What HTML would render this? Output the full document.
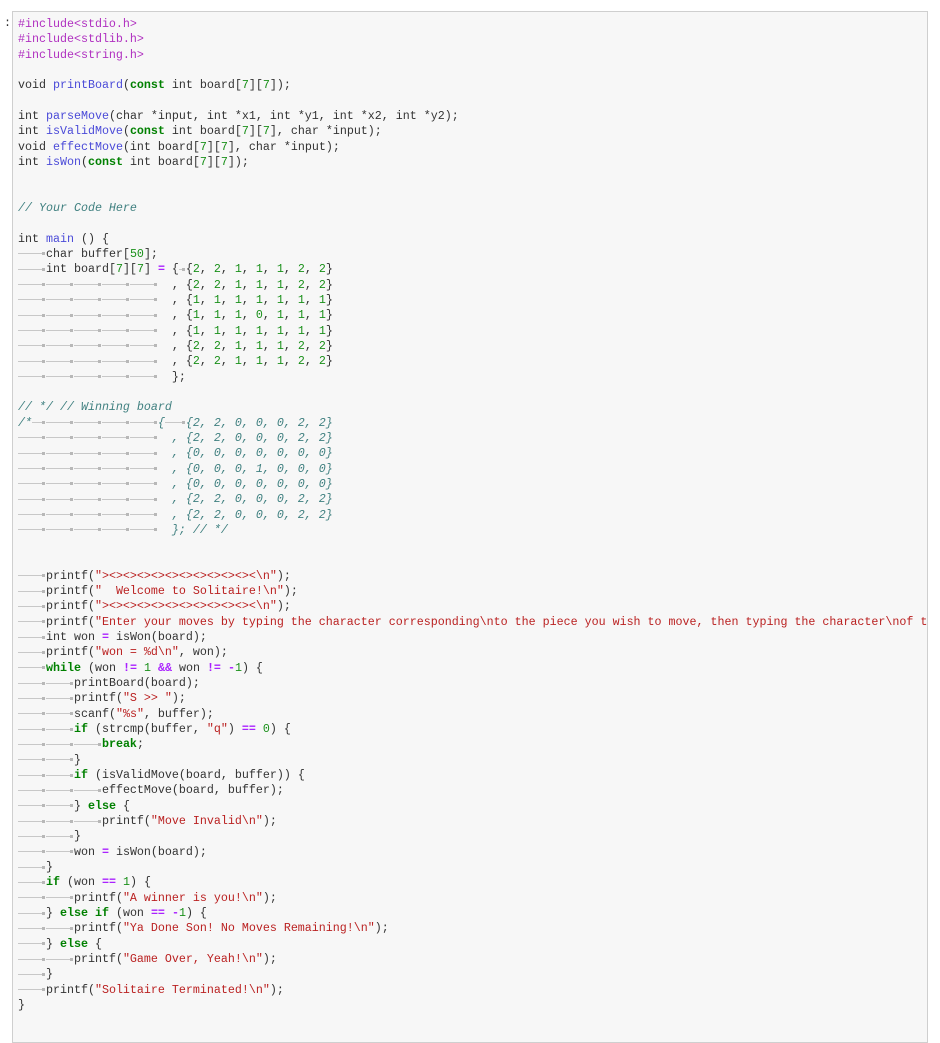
<!DOCTYPE html>
<html><head><meta charset="utf-8"><style>
html,body{margin:0;padding:0;background:#fff;width:940px;height:1024px;overflow:hidden}
.p{position:absolute;left:4px;top:16px;font:11.67px/15.33px "Liberation Mono",monospace;color:#303030}
.box{position:absolute;left:12px;top:11px;width:914px;height:1030px;background:#f7f7f7;border:1px solid #cfcfcf;overflow:hidden}
pre{margin:0;position:absolute;left:5px;top:5px;font:11.67px/15.33px "Liberation Mono",monospace;color:#333;tab-size:4;-moz-tab-size:4;white-space:pre}
.m{color:#b030c0}.f{color:#4a4ad8}.k{color:#008000;font-weight:bold}.n{color:#1a901a}.s{color:#ba2121}.o{color:#aa22ff;font-weight:bold}.c{color:#408080;font-style:italic}
.t{background:linear-gradient(#c8c8c8,#c8c8c8) left center/calc(100% - 4px) 1px no-repeat,linear-gradient(#b8b8b8,#b8b8b8) right 1px center/3px 3px no-repeat}
</style></head><body>
<div class="p">:</div>
<div class="box"><pre><span class="m">#include&lt;stdio.h&gt;</span>
<span class="m">#include&lt;stdlib.h&gt;</span>
<span class="m">#include&lt;string.h&gt;</span>

void <span class="f">printBoard</span>(<span class="k">const</span> int board[<span class="n">7</span>][<span class="n">7</span>]);

int <span class="f">parseMove</span>(char *input, int *x1, int *y1, int *x2, int *y2);
int <span class="f">isValidMove</span>(<span class="k">const</span> int board[<span class="n">7</span>][<span class="n">7</span>], char *input);
void <span class="f">effectMove</span>(int board[<span class="n">7</span>][<span class="n">7</span>], char *input);
int <span class="f">isWon</span>(<span class="k">const</span> int board[<span class="n">7</span>][<span class="n">7</span>]);


<span class="c">// Your Code Here</span>

int <span class="f">main</span> () {
<span class="t">	</span>char buffer[<span class="n">50</span>];
<span class="t">	</span>int board[<span class="n">7</span>][<span class="n">7</span>] <span class="o">=</span> {<span class="t">	</span>{<span class="n">2</span>, <span class="n">2</span>, <span class="n">1</span>, <span class="n">1</span>, <span class="n">1</span>, <span class="n">2</span>, <span class="n">2</span>}
<span class="t">	</span><span class="t">	</span><span class="t">	</span><span class="t">	</span><span class="t">	</span>  , {<span class="n">2</span>, <span class="n">2</span>, <span class="n">1</span>, <span class="n">1</span>, <span class="n">1</span>, <span class="n">2</span>, <span class="n">2</span>}
<span class="t">	</span><span class="t">	</span><span class="t">	</span><span class="t">	</span><span class="t">	</span>  , {<span class="n">1</span>, <span class="n">1</span>, <span class="n">1</span>, <span class="n">1</span>, <span class="n">1</span>, <span class="n">1</span>, <span class="n">1</span>}
<span class="t">	</span><span class="t">	</span><span class="t">	</span><span class="t">	</span><span class="t">	</span>  , {<span class="n">1</span>, <span class="n">1</span>, <span class="n">1</span>, <span class="n">0</span>, <span class="n">1</span>, <span class="n">1</span>, <span class="n">1</span>}
<span class="t">	</span><span class="t">	</span><span class="t">	</span><span class="t">	</span><span class="t">	</span>  , {<span class="n">1</span>, <span class="n">1</span>, <span class="n">1</span>, <span class="n">1</span>, <span class="n">1</span>, <span class="n">1</span>, <span class="n">1</span>}
<span class="t">	</span><span class="t">	</span><span class="t">	</span><span class="t">	</span><span class="t">	</span>  , {<span class="n">2</span>, <span class="n">2</span>, <span class="n">1</span>, <span class="n">1</span>, <span class="n">1</span>, <span class="n">2</span>, <span class="n">2</span>}
<span class="t">	</span><span class="t">	</span><span class="t">	</span><span class="t">	</span><span class="t">	</span>  , {<span class="n">2</span>, <span class="n">2</span>, <span class="n">1</span>, <span class="n">1</span>, <span class="n">1</span>, <span class="n">2</span>, <span class="n">2</span>}
<span class="t">	</span><span class="t">	</span><span class="t">	</span><span class="t">	</span><span class="t">	</span>  };

<span class="c">// */ // Winning board</span>
<span class="c">/*<span class="t">	</span><span class="t">	</span><span class="t">	</span><span class="t">	</span><span class="t">	</span>{<span class="t">	</span>{2, 2, 0, 0, 0, 2, 2}
<span class="t">	</span><span class="t">	</span><span class="t">	</span><span class="t">	</span><span class="t">	</span>  , {2, 2, 0, 0, 0, 2, 2}
<span class="t">	</span><span class="t">	</span><span class="t">	</span><span class="t">	</span><span class="t">	</span>  , {0, 0, 0, 0, 0, 0, 0}
<span class="t">	</span><span class="t">	</span><span class="t">	</span><span class="t">	</span><span class="t">	</span>  , {0, 0, 0, 1, 0, 0, 0}
<span class="t">	</span><span class="t">	</span><span class="t">	</span><span class="t">	</span><span class="t">	</span>  , {0, 0, 0, 0, 0, 0, 0}
<span class="t">	</span><span class="t">	</span><span class="t">	</span><span class="t">	</span><span class="t">	</span>  , {2, 2, 0, 0, 0, 2, 2}
<span class="t">	</span><span class="t">	</span><span class="t">	</span><span class="t">	</span><span class="t">	</span>  , {2, 2, 0, 0, 0, 2, 2}
<span class="t">	</span><span class="t">	</span><span class="t">	</span><span class="t">	</span><span class="t">	</span>  }; // */</span>


<span class="t">	</span>printf(<span class="s">"&gt;&lt;&gt;&lt;&gt;&lt;&gt;&lt;&gt;&lt;&gt;&lt;&gt;&lt;&gt;&lt;&gt;&lt;&gt;&lt;&gt;&lt;\n"</span>);
<span class="t">	</span>printf(<span class="s">"  Welcome to Solitaire!\n"</span>);
<span class="t">	</span>printf(<span class="s">"&gt;&lt;&gt;&lt;&gt;&lt;&gt;&lt;&gt;&lt;&gt;&lt;&gt;&lt;&gt;&lt;&gt;&lt;&gt;&lt;&gt;&lt;\n"</span>);
<span class="t">	</span>printf(<span class="s">"Enter your moves by typing the character corresponding\nto the piece you wish to move, then typing the character\nof the destination\n"</span>);
<span class="t">	</span>int won <span class="o">=</span> isWon(board);
<span class="t">	</span>printf(<span class="s">"won = %d\n"</span>, won);
<span class="t">	</span><span class="k">while</span> (won <span class="o">!=</span> <span class="n">1</span> <span class="o">&amp;&amp;</span> won <span class="o">!=</span> <span class="o">-</span><span class="n">1</span>) {
<span class="t">	</span><span class="t">	</span>printBoard(board);
<span class="t">	</span><span class="t">	</span>printf(<span class="s">"S &gt;&gt; "</span>);
<span class="t">	</span><span class="t">	</span>scanf(<span class="s">"%s"</span>, buffer);
<span class="t">	</span><span class="t">	</span><span class="k">if</span> (strcmp(buffer, <span class="s">"q"</span>) <span class="o">==</span> <span class="n">0</span>) {
<span class="t">	</span><span class="t">	</span><span class="t">	</span><span class="k">break</span>;
<span class="t">	</span><span class="t">	</span>}
<span class="t">	</span><span class="t">	</span><span class="k">if</span> (isValidMove(board, buffer)) {
<span class="t">	</span><span class="t">	</span><span class="t">	</span>effectMove(board, buffer);
<span class="t">	</span><span class="t">	</span>} <span class="k">else</span> {
<span class="t">	</span><span class="t">	</span><span class="t">	</span>printf(<span class="s">"Move Invalid\n"</span>);
<span class="t">	</span><span class="t">	</span>}
<span class="t">	</span><span class="t">	</span>won <span class="o">=</span> isWon(board);
<span class="t">	</span>}
<span class="t">	</span><span class="k">if</span> (won <span class="o">==</span> <span class="n">1</span>) {
<span class="t">	</span><span class="t">	</span>printf(<span class="s">"A winner is you!\n"</span>);
<span class="t">	</span>} <span class="k">else if</span> (won <span class="o">==</span> <span class="o">-</span><span class="n">1</span>) {
<span class="t">	</span><span class="t">	</span>printf(<span class="s">"Ya Done Son! No Moves Remaining!\n"</span>);
<span class="t">	</span>} <span class="k">else</span> {
<span class="t">	</span><span class="t">	</span>printf(<span class="s">"Game Over, Yeah!\n"</span>);
<span class="t">	</span>}
<span class="t">	</span>printf(<span class="s">"Solitaire Terminated!\n"</span>);
}</pre></div>
</body></html>
